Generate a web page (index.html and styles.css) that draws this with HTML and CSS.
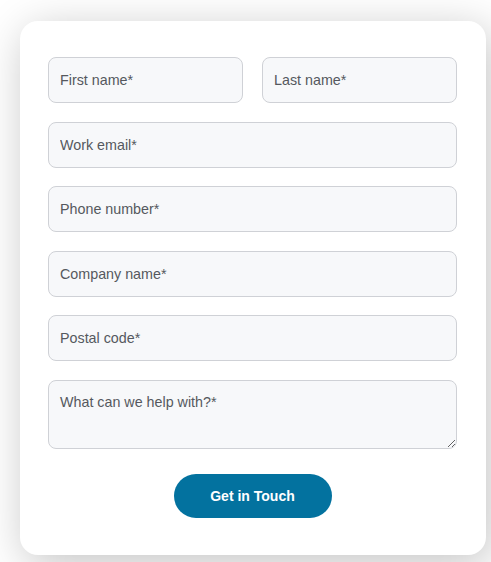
FILE: index.html
```html
<!DOCTYPE html>
<html lang="en">
<head>
<meta charset="utf-8">
<title>Contact form</title>
<link rel="stylesheet" href="styles.css">
</head>
<body>
<form class="card">
  <div class="row">
    <input class="field" type="text" placeholder="First name*">
    <input class="field" type="text" placeholder="Last name*">
  </div>
  <input class="field" type="email" placeholder="Work email*">
  <input class="field" type="tel" placeholder="Phone number*">
  <input class="field" type="text" placeholder="Company name*">
  <input class="field" type="text" placeholder="Postal code*">
  <textarea class="field area" placeholder="What can we help with?*"></textarea>
  <div class="actions">
    <button class="btn" type="button">Get in Touch</button>
  </div>
</form>
</body>
</html>
```
FILE: styles.css
```css
html, body {
  margin: 0;
  padding: 0;
  background: #ffffff;
}
body {
  padding: 21px 5px 8px 20px;
  font-family: "Liberation Sans", Arial, sans-serif;
}
.card {
  box-sizing: border-box;
  width: 466px;
  background: #ffffff;
  border-radius: 18px;
  padding: 36px 29px 37px 28px;
  display: flex;
  flex-direction: column;
  gap: 18.6px;
  box-shadow: 5px 9px 45px rgba(0, 0, 0, 0.24);
}
.row {
  display: flex;
  gap: 19px;
}
.row .field {
  flex: 1;
  min-width: 0;
}
.field {
  box-sizing: border-box;
  width: 100%;
  height: 46px;
  margin: 0;
  padding: 0 11px;
  border: 1px solid #cfd1d6;
  border-radius: 8px;
  background: #f7f8fa;
  font-family: "Liberation Sans", Arial, sans-serif;
  font-size: 14.3px;
  color: #333;
  outline: none;
}
.field::placeholder {
  color: #55585e;
  opacity: 1;
}
.area {
  height: 69px;
  padding: 13px 11px;
  resize: vertical;
  display: block;
}
.actions {
  display: flex;
  justify-content: center;
  margin-top: 6px;
}
.btn {
  width: 158px;
  height: 44.5px;
  border: none;
  border-radius: 23px;
  background: #03729f;
  color: #ffffff;
  font-family: "Liberation Sans", Arial, sans-serif;
  font-size: 14px;
  font-weight: bold;
  cursor: pointer;
}
```
